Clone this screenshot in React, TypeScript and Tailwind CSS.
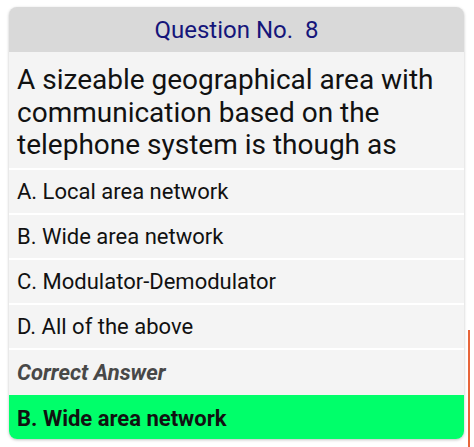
export default function App() {
  const options = [
    "A. Local area network",
    "B. Wide area network",
    "C. Modulator-Demodulator",
    "D. All of the above",
  ];

  return (
    <div className="relative w-[474px] h-[447px] bg-white overflow-hidden font-['Roboto','Liberation_Sans',sans-serif]">
      <div className="ml-[9px] mt-[7px] w-[455px] rounded-[8px] bg-[#f4f4f4] shadow-[0_1px_3px_rgba(0,0,0,0.25)] overflow-hidden">
        {/* header */}
        <div className="h-[45px] bg-[#d9d9d9] flex items-center justify-center">
          <span className="text-[24px] text-[#15157a] whitespace-pre">Question No.  8</span>
        </div>

        {/* question */}
        <div className="pl-[8px] pr-2 pt-[12px] pb-[6px] text-[28px] leading-[32.5px] text-[#111]">
          A sizeable geographical area with communication based on the telephone system is though as
        </div>

        {/* options */}
        {options.map((opt) => (
          <div
            key={opt}
            className="h-[45px] pl-[8px] pt-[9px] border-t-2 border-white text-[22px] leading-[26px] text-[#111]"
          >
            {opt}
          </div>
        ))}

        <div className="h-[47px] pl-[8px] pt-[10px] border-t-2 border-white text-[22px] leading-[26px] font-bold italic text-[#484848]">
          Correct Answer
        </div>

        <div className="h-[44px] pl-[8px] pt-[11px] bg-[#00ff6a] text-[22px] leading-[26px] font-bold text-[#111]">
          B. Wide area network
        </div>
      </div>

      {/* scrollbar */}
      <div className="absolute right-[4px] top-[330px] w-[2px] h-[117px] bg-[#e8663a]" />
    </div>
  );
}
